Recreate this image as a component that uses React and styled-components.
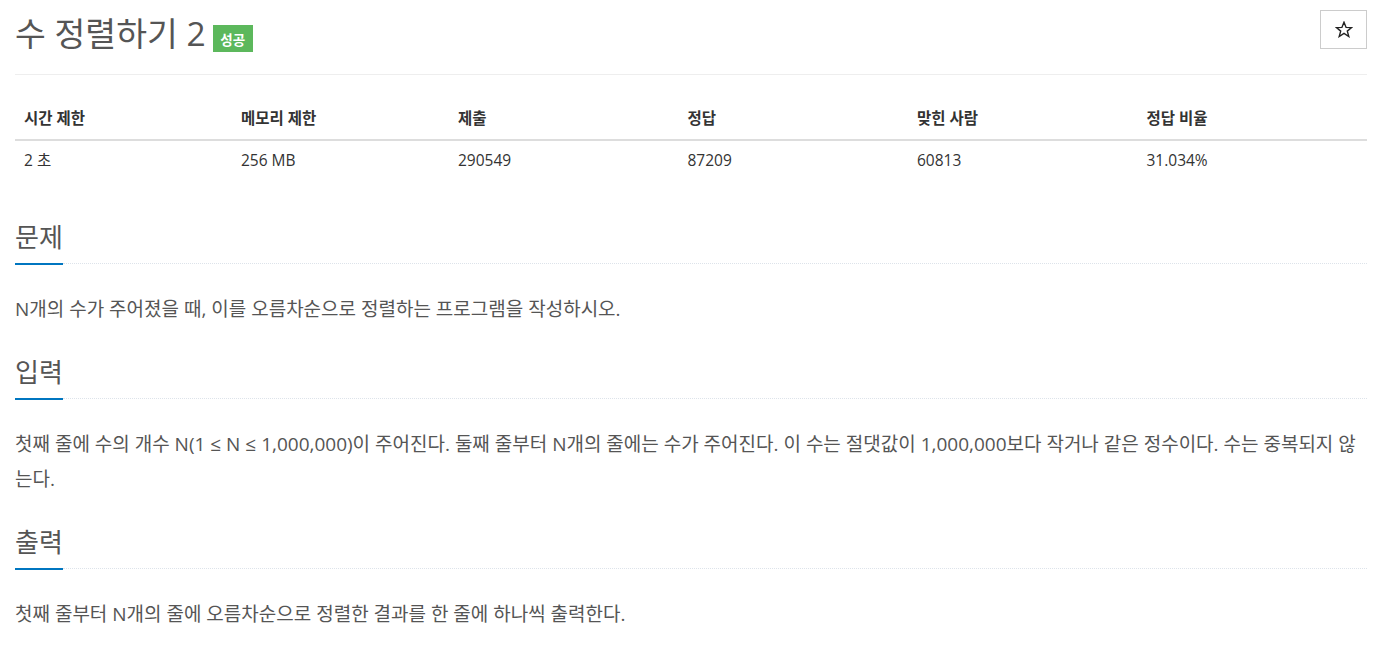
import React from 'react';
import styled, { createGlobalStyle } from 'styled-components';

const fonts = {
  base: '"Open Sans", "Noto Sans CJK KR", sans-serif'
};

const GlobalStyle = createGlobalStyle`
  body {
    margin: 0;
    background: #fff;
    font-family: ${fonts.base};
    color: #333;
  }
`;

const Page = styled.div`
  padding: 0 12px 0 15px;
`;

const Header = styled.header`
  display: flex;
  justify-content: space-between;
  align-items: flex-start;
  padding: 10px 0 18px;
  border-bottom: 1px solid #eee;
`;

const TitleRow = styled.div`
  display: flex;
  align-items: flex-end;
  gap: 7px;
`;

const Title = styled.h1`
  margin: 0;
  font-size: 33.5px;
  font-weight: 400;
  line-height: 46px;
  color: #555;
`;

const Badge = styled.span`
  display: inline-flex;
  align-items: center;
  justify-content: center;
  width: 40px;
  height: 27px;
  margin-bottom: 4px;
  background: #5cb85c;
  color: #fff;
  font-size: 13.5px;
  font-weight: 600;
`;

const StarButton = styled.button`
  display: flex;
  align-items: center;
  justify-content: center;
  width: 47px;
  height: 39px;
  padding: 0;
  border: 1px solid #ccc;
  border-radius: 0;
  background: #fff;
  cursor: pointer;
`;

const Table = styled.table`
  width: 100%;
  margin-top: 22px;
  border-collapse: collapse;
  table-layout: fixed;
  line-height: 20px;
`;

const Th = styled.th`
  width: ${({ $w }) => $w};
  padding: 11px 9px;
  text-align: left;
  font-size: 15.5px;
  font-weight: 700;
  color: #333;
  border-bottom: 2px solid #ddd;
`;

const Td = styled.td`
  padding: 9px 9px 7px;
  font-size: 15.5px;
  color: #333;
`;

const Section = styled.section`
  margin-top: ${({ $first }) => ($first ? '43px' : '28px')};
`;

const Headline = styled.div`
  display: flex;
  align-items: flex-end;
`;

const H2 = styled.h2`
  margin: 0;
  padding-bottom: 9px;
  font-size: 26px;
  font-weight: 400;
  line-height: 34px;
  color: #555;
  border-bottom: 2px solid #0076c0;
`;

const DottedRule = styled.div`
  flex: 1;
  margin-bottom: 1px;
  border-bottom: 1px dotted #dde3ea;
`;

const Text = styled.p`
  margin: 27px 0 0;
  font-size: 19px;
  line-height: 35px;
  color: #555;
`;

const StarIcon = () => (
  <svg width="18" height="17" viewBox="0 0 18 17" aria-hidden="true">
    <polygon
      points="9,1.2 11.1,6.4 16.6,6.6 12.3,10.1 13.8,15.5 9,12.4 4.2,15.5 5.7,10.1 1.4,6.6 6.9,6.4"
      fill="none"
      stroke="#222"
      strokeWidth="1.4"
      strokeLinejoin="miter"
    />
  </svg>
);

const columns = [
  { head: '시간 제한', value: '2 초', w: '16%' },
  { head: '메모리 제한', value: '256 MB', w: '16%' },
  { head: '제출', value: '290549', w: '17%' },
  { head: '정답', value: '87209', w: '17%' },
  { head: '맞힌 사람', value: '60813', w: '17%' },
  { head: '정답 비율', value: '31.034%', w: '17%' }
];

const sections = [
  { title: '문제', body: 'N개의 수가 주어졌을 때, 이를 오름차순으로 정렬하는 프로그램을 작성하시오.' },
  {
    title: '입력',
    body:
      '첫째 줄에 수의 개수 N(1 ≤ N ≤ 1,000,000)이 주어진다. 둘째 줄부터 N개의 줄에는 수가 주어진다. 이 수는 절댓값이 1,000,000보다 작거나 같은 정수이다. 수는 중복되지 않는다.'
  },
  { title: '출력', body: '첫째 줄부터 N개의 줄에 오름차순으로 정렬한 결과를 한 줄에 하나씩 출력한다.' }
];

const App = () => (
  <Page>
    <GlobalStyle />
    <Header>
      <TitleRow>
        <Title>수 정렬하기 2</Title>
        <Badge>성공</Badge>
      </TitleRow>
      <StarButton aria-label="즐겨찾기">
        <StarIcon />
      </StarButton>
    </Header>

    <Table>
      <thead>
        <tr>
          {columns.map(col => (
            <Th key={col.head} $w={col.w}>
              {col.head}
            </Th>
          ))}
        </tr>
      </thead>
      <tbody>
        <tr>
          {columns.map(col => (
            <Td key={col.head}>{col.value}</Td>
          ))}
        </tr>
      </tbody>
    </Table>

    {sections.map((s, i) => (
      <Section key={s.title} $first={i === 0}>
        <Headline>
          <H2>{s.title}</H2>
          <DottedRule />
        </Headline>
        <Text>{s.body}</Text>
      </Section>
    ))}
  </Page>
);

export default App;
